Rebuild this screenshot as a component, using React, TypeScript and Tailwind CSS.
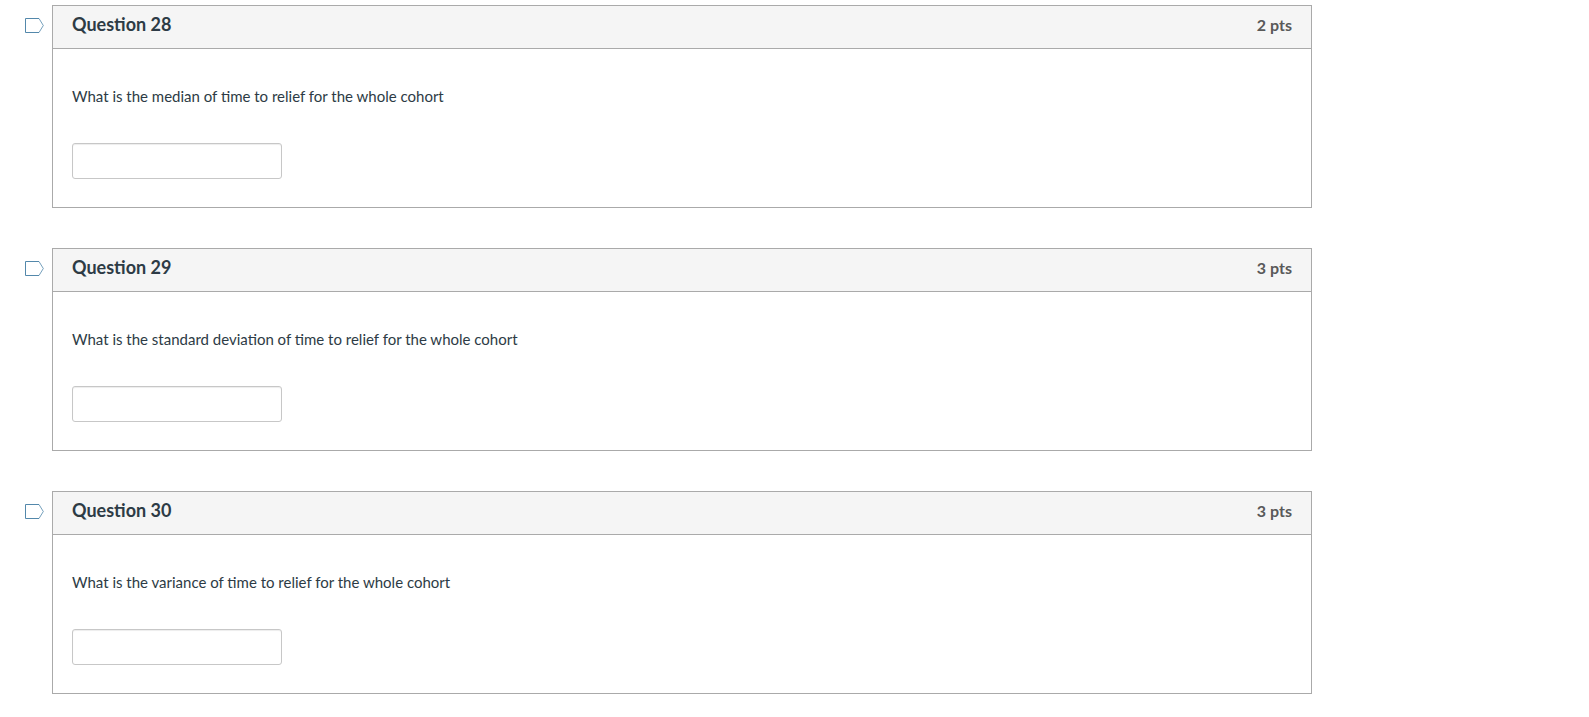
import { useState } from "react";

type Question = {
  id: number;
  points: number;
  text: string;
};

const QUESTIONS: Question[] = [
  {
    id: 28,
    points: 2,
    text: "What is the median of time to relief for the whole cohort",
  },
  {
    id: 29,
    points: 3,
    text: "What is the standard deviation of time to relief for the whole cohort",
  },
  {
    id: 30,
    points: 3,
    text: "What is the variance of time to relief for the whole cohort",
  },
];

function FlagButton({ id }: { id: number }) {
  const [flagged, setFlagged] = useState(false);

  return (
    <button
      type="button"
      onClick={() => setFlagged((v) => !v)}
      aria-label={`Flag question ${id}`}
      aria-pressed={flagged}
      className="mt-[13px] h-[15px] w-[19px] shrink-0 cursor-pointer text-[#5388ab]"
    >
      <svg
        viewBox="0 0 19 15"
        className="block h-[15px] w-[19px]"
        fill={flagged ? "#f5c84c" : "none"}
        stroke="currentColor"
      >
        <path d="M14 .5H.5v14H14" />
        <path d="M14 .5l4.3 7-4.3 7" strokeOpacity="0.8" />
      </svg>
    </button>
  );
}

function QuestionCard({ question }: { question: Question }) {
  const [answer, setAnswer] = useState("");

  return (
    <section className="flex items-start gap-2">
      <FlagButton id={question.id} />

      <div className="min-w-0 flex-1 border border-[#aaaaaa] bg-white">
        {/* Header */}
        <div className="flex items-baseline justify-between border-b border-[#aaaaaa] bg-[#f5f5f5] px-[19px] pt-1 pb-2.5">
          <h2 className="text-lg font-bold">Question {question.id}</h2>
          <span className="text-base font-bold text-[#595959]">
            {question.points} pts
          </span>
        </div>

        {/* Answer */}
        <div className="px-[19px] pt-[35px] pb-7">
          <label
            htmlFor={`answer-${question.id}`}
            className="block text-[15px] leading-6"
          >
            {question.text}
          </label>
          <input
            id={`answer-${question.id}`}
            type="text"
            value={answer}
            onChange={(e) => setAnswer(e.target.value)}
            className="mt-[35px] block h-9 w-[210px] rounded-[3px] border border-[#c7c7c7] bg-white px-2 text-base shadow-[inset_0_1px_1px_rgba(0,0,0,0.075)] focus:border-[#5388ab] focus:outline-none"
          />
        </div>
      </div>
    </section>
  );
}

export default function App() {
  return (
    <main className="flex flex-col gap-10 bg-white pt-[5px] pr-[277px] pl-[25px] font-['Lato',sans-serif] text-[#2d3b45]">
      {QUESTIONS.map((q) => (
        <QuestionCard key={q.id} question={q} />
      ))}
    </main>
  );
}
